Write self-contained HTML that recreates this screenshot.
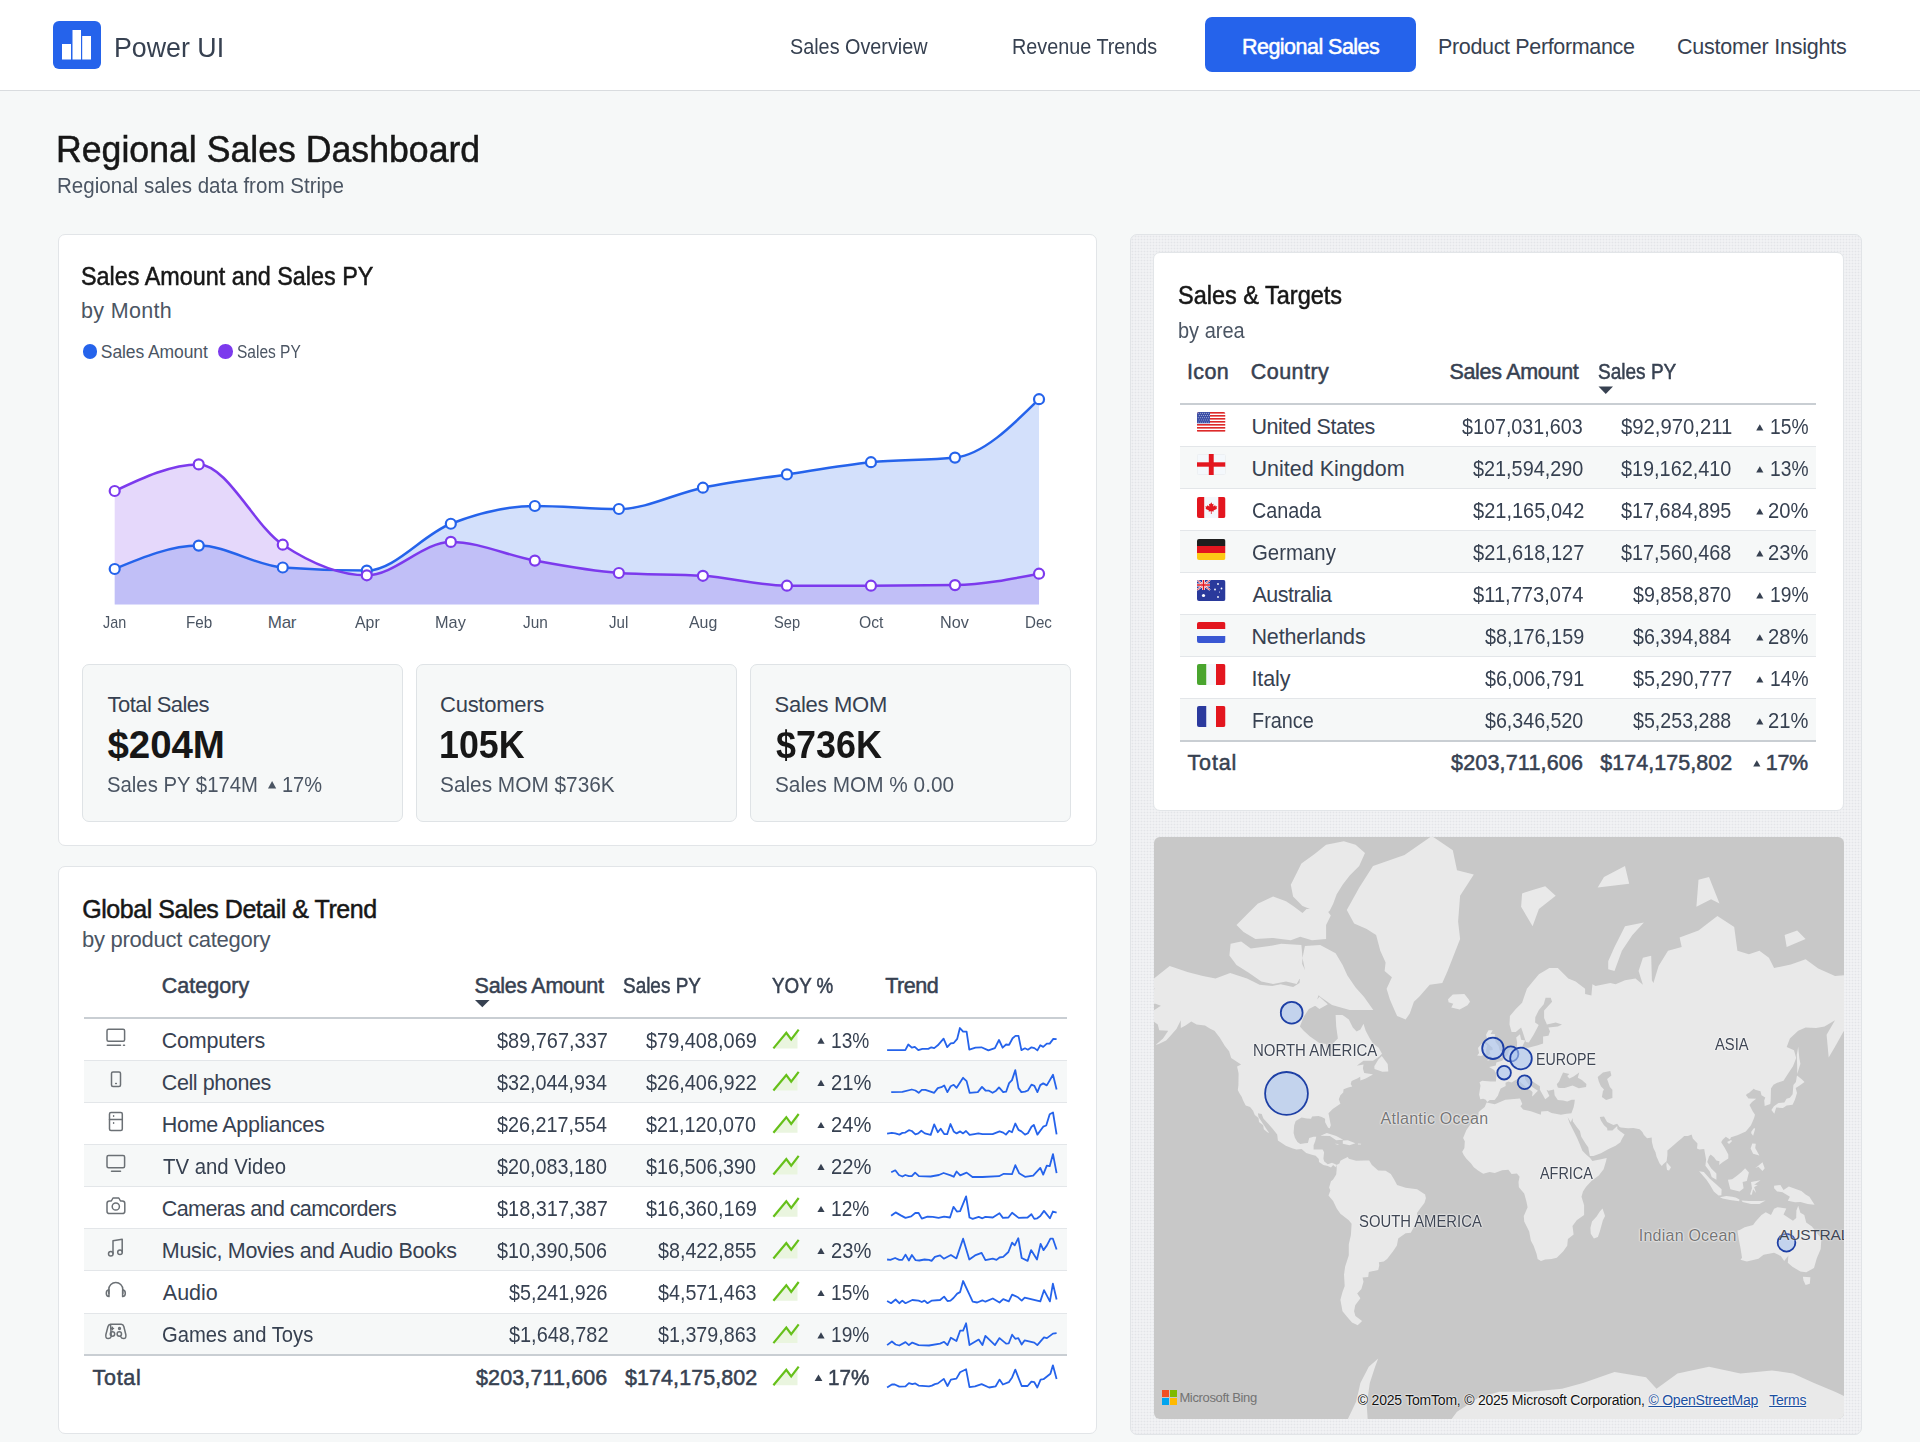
<!DOCTYPE html><html><head><meta charset="utf-8"><title>Power UI - Regional Sales</title><style>
*{box-sizing:border-box;margin:0;padding:0}
html,body{width:1920px;height:1442px;overflow:hidden;background:#f6f8f8;font-family:"Liberation Sans", sans-serif}
.t{position:absolute;white-space:nowrap}
.card{position:absolute;background:#fff;border:1px solid #e2e5e8;border-radius:7px}
</style></head><body><div style="position:absolute;left:0px;top:0px;width:1920px;height:91px;background:#fff;border-bottom:1px solid #d9dcdf"></div>
<svg style="position:absolute;left:53px;top:21px" width="48" height="48" viewBox="0 0 48 48"><rect width="48" height="48" rx="6" fill="#2563eb"/><rect x="9" y="23" width="9" height="15.5" fill="#fff"/><rect x="19.5" y="9" width="8.5" height="29.5" fill="#fff"/><rect x="29.2" y="15" width="8.8" height="23.5" fill="#fff"/></svg>
<div class="t" style="top:34.00px;left:113.59px;font-size:28px;line-height:28px;font-weight:400;color:#374151;transform:scaleX(0.9563);transform-origin:0 0;">Power UI</div>
<div style="position:absolute;left:1205px;top:17px;width:211px;height:55px;background:#2563eb;border-radius:7px"></div>
<div class="t" style="top:37.00px;left:790.00px;font-size:21.5px;line-height:21.5px;font-weight:400;color:#374151;transform:scaleX(0.9210);transform-origin:0 0;">Sales Overview</div>
<div class="t" style="top:37.00px;left:1012.08px;font-size:21.5px;line-height:21.5px;font-weight:400;color:#374151;transform:scaleX(0.9207);transform-origin:0 0;">Revenue Trends</div>
<div class="t" style="top:37.00px;left:1438.00px;font-size:21.5px;line-height:21.5px;font-weight:400;color:#374151;letter-spacing:-0.344px;">Product Performance</div>
<div class="t" style="top:37.00px;left:1677.00px;font-size:21.5px;line-height:21.5px;font-weight:400;color:#374151;letter-spacing:-0.219px;">Customer Insights</div>
<div class="t" style="top:37.00px;left:1242.00px;font-size:21.5px;line-height:21.5px;font-weight:400;color:#ffffff;-webkit-text-stroke:0.5px #ffffff;letter-spacing:-0.529px;">Regional Sales</div>
<div class="t" style="top:131.00px;left:55.81px;font-size:37px;line-height:37px;font-weight:400;color:#171717;-webkit-text-stroke:0.5px #171717;transform:scaleX(0.9637);transform-origin:0 0;">Regional Sales Dashboard</div>
<div class="t" style="top:175.00px;left:57.07px;font-size:22px;line-height:22px;font-weight:400;color:#4b5563;transform:scaleX(0.9349);transform-origin:0 0;">Regional sales data from Stripe</div>
<div class="card" style="left:58px;top:234px;width:1039px;height:612px"></div>
<div class="t" style="top:264.00px;left:81.07px;font-size:25px;line-height:25px;font-weight:400;color:#171717;-webkit-text-stroke:0.5px #171717;transform:scaleX(0.9349);transform-origin:0 0;">Sales Amount and Sales PY</div>
<div class="t" style="top:301.00px;left:81.00px;font-size:21.5px;line-height:21.5px;font-weight:400;color:#4b5563;letter-spacing:0.332px;">by Month</div>
<div style="position:absolute;left:82.5px;top:344px;width:14.5px;height:14.5px;background:#2563eb;border-radius:50%"></div>
<div class="t" style="top:344.00px;left:100.80px;font-size:17.5px;line-height:17.5px;font-weight:400;color:#4b5563;letter-spacing:-0.081px;">Sales Amount</div>
<div style="position:absolute;left:218px;top:344px;width:14.5px;height:14.5px;background:#7c3aed;border-radius:50%"></div>
<div class="t" style="top:344.00px;left:236.70px;font-size:17.5px;line-height:17.5px;font-weight:400;color:#4b5563;transform:scaleX(0.8865);transform-origin:0 0;">Sales PY</div>
<svg style="position:absolute;left:0;top:0" width="1920" height="700"><path d="M114.70,569.00C142.71,557.30 170.72,545.60 198.73,545.60C226.74,545.60 254.75,565.43 282.76,567.50C310.77,569.57 338.78,570.60 366.79,570.60C394.80,570.60 422.81,534.52 450.82,523.75C478.83,512.98 506.84,506.00 534.85,506.00C562.86,506.00 590.87,509.00 618.88,509.00C646.89,509.00 674.90,493.47 702.91,487.70C730.92,481.93 758.93,478.65 786.94,474.40C814.95,470.15 842.96,465.00 870.97,462.20C898.98,459.40 926.99,460.67 955.00,457.60C983.01,454.53 1011.02,426.87 1039.03,399.20L1039.03,604.5L114.70,604.5Z" fill="#2563eb" fill-opacity="0.2"/><path d="M114.70,491.00C142.71,477.70 170.72,464.40 198.73,464.40C226.74,464.40 254.75,526.22 282.76,544.70C310.77,563.18 338.78,575.30 366.79,575.30C394.80,575.30 422.81,541.90 450.82,541.90C478.83,541.90 506.84,555.42 534.85,560.60C562.86,565.78 590.87,571.13 618.88,573.00C646.89,574.87 674.90,573.93 702.91,575.80C730.92,577.67 758.93,585.70 786.94,585.70C814.95,585.70 842.96,585.70 870.97,585.70C898.98,585.70 926.99,585.50 955.00,585.10C983.01,584.70 1011.02,579.20 1039.03,573.70L1039.03,604.5L114.70,604.5Z" fill="#7c3aed" fill-opacity="0.2"/><path d="M114.70,569.00C142.71,557.30 170.72,545.60 198.73,545.60C226.74,545.60 254.75,565.43 282.76,567.50C310.77,569.57 338.78,570.60 366.79,570.60C394.80,570.60 422.81,534.52 450.82,523.75C478.83,512.98 506.84,506.00 534.85,506.00C562.86,506.00 590.87,509.00 618.88,509.00C646.89,509.00 674.90,493.47 702.91,487.70C730.92,481.93 758.93,478.65 786.94,474.40C814.95,470.15 842.96,465.00 870.97,462.20C898.98,459.40 926.99,460.67 955.00,457.60C983.01,454.53 1011.02,426.87 1039.03,399.20" fill="none" stroke="#2563eb" stroke-width="2.5"/><path d="M114.70,491.00C142.71,477.70 170.72,464.40 198.73,464.40C226.74,464.40 254.75,526.22 282.76,544.70C310.77,563.18 338.78,575.30 366.79,575.30C394.80,575.30 422.81,541.90 450.82,541.90C478.83,541.90 506.84,555.42 534.85,560.60C562.86,565.78 590.87,571.13 618.88,573.00C646.89,574.87 674.90,573.93 702.91,575.80C730.92,577.67 758.93,585.70 786.94,585.70C814.95,585.70 842.96,585.70 870.97,585.70C898.98,585.70 926.99,585.50 955.00,585.10C983.01,584.70 1011.02,579.20 1039.03,573.70" fill="none" stroke="#7c3aed" stroke-width="2.5"/><circle cx="114.70" cy="569" r="5" fill="#fff" stroke="#2563eb" stroke-width="2.2"/><circle cx="198.73" cy="545.6" r="5" fill="#fff" stroke="#2563eb" stroke-width="2.2"/><circle cx="282.76" cy="567.5" r="5" fill="#fff" stroke="#2563eb" stroke-width="2.2"/><circle cx="366.79" cy="570.6" r="5" fill="#fff" stroke="#2563eb" stroke-width="2.2"/><circle cx="450.82" cy="523.75" r="5" fill="#fff" stroke="#2563eb" stroke-width="2.2"/><circle cx="534.85" cy="506" r="5" fill="#fff" stroke="#2563eb" stroke-width="2.2"/><circle cx="618.88" cy="509" r="5" fill="#fff" stroke="#2563eb" stroke-width="2.2"/><circle cx="702.91" cy="487.7" r="5" fill="#fff" stroke="#2563eb" stroke-width="2.2"/><circle cx="786.94" cy="474.4" r="5" fill="#fff" stroke="#2563eb" stroke-width="2.2"/><circle cx="870.97" cy="462.2" r="5" fill="#fff" stroke="#2563eb" stroke-width="2.2"/><circle cx="955.00" cy="457.6" r="5" fill="#fff" stroke="#2563eb" stroke-width="2.2"/><circle cx="1039.03" cy="399.2" r="5" fill="#fff" stroke="#2563eb" stroke-width="2.2"/><circle cx="114.70" cy="491" r="5" fill="#fff" stroke="#7c3aed" stroke-width="2.2"/><circle cx="198.73" cy="464.4" r="5" fill="#fff" stroke="#7c3aed" stroke-width="2.2"/><circle cx="282.76" cy="544.7" r="5" fill="#fff" stroke="#7c3aed" stroke-width="2.2"/><circle cx="366.79" cy="575.3" r="5" fill="#fff" stroke="#7c3aed" stroke-width="2.2"/><circle cx="450.82" cy="541.9" r="5" fill="#fff" stroke="#7c3aed" stroke-width="2.2"/><circle cx="534.85" cy="560.6" r="5" fill="#fff" stroke="#7c3aed" stroke-width="2.2"/><circle cx="618.88" cy="573" r="5" fill="#fff" stroke="#7c3aed" stroke-width="2.2"/><circle cx="702.91" cy="575.8" r="5" fill="#fff" stroke="#7c3aed" stroke-width="2.2"/><circle cx="786.94" cy="585.7" r="5" fill="#fff" stroke="#7c3aed" stroke-width="2.2"/><circle cx="870.97" cy="585.7" r="5" fill="#fff" stroke="#7c3aed" stroke-width="2.2"/><circle cx="955.00" cy="585.1" r="5" fill="#fff" stroke="#7c3aed" stroke-width="2.2"/><circle cx="1039.03" cy="573.7" r="5" fill="#fff" stroke="#7c3aed" stroke-width="2.2"/></svg>
<div class="t" style="top:614.00px;left:103.10px;font-size:17px;line-height:17px;font-weight:400;color:#4b5563;transform:scaleX(0.8459);transform-origin:0 0;">Jan</div>
<div class="t" style="top:614.00px;left:185.70px;font-size:17px;line-height:17px;font-weight:400;color:#4b5563;transform:scaleX(0.8980);transform-origin:0 0;">Feb</div>
<div class="t" style="top:614.00px;left:267.80px;font-size:17px;line-height:17px;font-weight:400;color:#4b5563;letter-spacing:-0.308px;">Mar</div>
<div class="t" style="top:614.00px;left:354.70px;font-size:17px;line-height:17px;font-weight:400;color:#4b5563;transform:scaleX(0.9331);transform-origin:0 0;">Apr</div>
<div class="t" style="top:614.00px;left:434.99px;font-size:17px;line-height:17px;font-weight:400;color:#4b5563;transform:scaleX(0.9584);transform-origin:0 0;">May</div>
<div class="t" style="top:614.00px;left:522.50px;font-size:17px;line-height:17px;font-weight:400;color:#4b5563;transform:scaleX(0.9052);transform-origin:0 0;">Jun</div>
<div class="t" style="top:614.00px;left:609.40px;font-size:17px;line-height:17px;font-weight:400;color:#4b5563;transform:scaleX(0.8876);transform-origin:0 0;">Jul</div>
<div class="t" style="top:614.00px;left:689.05px;font-size:17px;line-height:17px;font-weight:400;color:#4b5563;transform:scaleX(0.9364);transform-origin:0 0;">Aug</div>
<div class="t" style="top:614.00px;left:774.05px;font-size:17px;line-height:17px;font-weight:400;color:#4b5563;transform:scaleX(0.8626);transform-origin:0 0;">Sep</div>
<div class="t" style="top:614.00px;left:859.05px;font-size:17px;line-height:17px;font-weight:400;color:#4b5563;transform:scaleX(0.9243);transform-origin:0 0;">Oct</div>
<div class="t" style="top:614.00px;left:940.34px;font-size:17px;line-height:17px;font-weight:400;color:#4b5563;transform:scaleX(0.9552);transform-origin:0 0;">Nov</div>
<div class="t" style="top:614.00px;left:1025.46px;font-size:17px;line-height:17px;font-weight:400;color:#4b5563;transform:scaleX(0.8913);transform-origin:0 0;">Dec</div>
<div style="position:absolute;left:82px;top:664px;width:321px;height:157.5px;background:#f6f8f8;border:1px solid #dfe3e6;border-radius:7px"></div>
<div class="t" style="top:694.00px;left:107.60px;font-size:22px;line-height:22px;font-weight:400;color:#374151;letter-spacing:-0.572px;">Total Sales</div>
<div class="t" style="top:726.00px;left:107.60px;font-size:38.5px;line-height:38.5px;font-weight:700;color:#171717;letter-spacing:-0.137px;">$204M</div>
<div class="t" style="top:774.00px;left:106.68px;font-size:22px;line-height:22px;font-weight:400;color:#4b5563;transform:scaleX(0.9236);transform-origin:0 0;">Sales PY $174M</div>
<div style="position:absolute;left:415.5px;top:664px;width:321px;height:157.5px;background:#f6f8f8;border:1px solid #dfe3e6;border-radius:7px"></div>
<div class="t" style="top:694.00px;left:440.10px;font-size:22px;line-height:22px;font-weight:400;color:#374151;letter-spacing:-0.282px;">Customers</div>
<div class="t" style="top:726.00px;left:439.24px;font-size:38.5px;line-height:38.5px;font-weight:700;color:#171717;transform:scaleX(0.9298);transform-origin:0 0;">105K</div>
<div class="t" style="top:774.00px;left:440.15px;font-size:22px;line-height:22px;font-weight:400;color:#4b5563;transform:scaleX(0.9464);transform-origin:0 0;">Sales MOM $736K</div>
<div style="position:absolute;left:750px;top:664px;width:321px;height:157.5px;background:#f6f8f8;border:1px solid #dfe3e6;border-radius:7px"></div>
<div class="t" style="top:694.00px;left:774.60px;font-size:22px;line-height:22px;font-weight:400;color:#374151;letter-spacing:-0.285px;">Sales MOM</div>
<div class="t" style="top:726.00px;left:775.60px;font-size:38.5px;line-height:38.5px;font-weight:700;color:#171717;transform:scaleX(0.9327);transform-origin:0 0;">$736K</div>
<div class="t" style="top:774.00px;left:774.66px;font-size:22px;line-height:22px;font-weight:400;color:#4b5563;transform:scaleX(0.9449);transform-origin:0 0;">Sales MOM % 0.00</div>
<svg style="position:absolute;left:268.4px;top:781px" width="8.2" height="7.6"><path d="M4.1,0L8.2,7.6L0,7.6Z" fill="#4b5563"/></svg>
<div class="t" style="top:774.00px;left:282.49px;font-size:22px;line-height:22px;font-weight:400;color:#4b5563;transform:scaleX(0.9089);transform-origin:0 0;">17%</div>
<div class="card" style="left:58px;top:866px;width:1039px;height:568px"></div>
<div class="t" style="top:897.00px;left:82.30px;font-size:25px;line-height:25px;font-weight:400;color:#171717;-webkit-text-stroke:0.5px #171717;letter-spacing:-0.475px;">Global Sales Detail &amp; Trend</div>
<div class="t" style="top:929.00px;left:82.00px;font-size:22px;line-height:22px;font-weight:400;color:#4b5563;letter-spacing:-0.262px;">by product category</div>
<div class="t" style="top:976.00px;left:161.80px;font-size:21.5px;line-height:21.5px;font-weight:400;color:#374151;-webkit-text-stroke:0.5px #374151;letter-spacing:0.030px;">Category</div>
<div class="t" style="top:976.00px;left:474.60px;font-size:21.5px;line-height:21.5px;font-weight:400;color:#374151;-webkit-text-stroke:0.5px #374151;letter-spacing:-0.298px;">Sales Amount</div>
<div class="t" style="top:976.00px;left:623.40px;font-size:21.5px;line-height:21.5px;font-weight:400;color:#374151;-webkit-text-stroke:0.5px #374151;transform:scaleX(0.8809);transform-origin:0 0;">Sales PY</div>
<div class="t" style="top:976.00px;left:772.40px;font-size:21.5px;line-height:21.5px;font-weight:400;color:#374151;-webkit-text-stroke:0.5px #374151;transform:scaleX(0.8739);transform-origin:0 0;">YOY %</div>
<div class="t" style="top:976.00px;left:885.20px;font-size:21.5px;line-height:21.5px;font-weight:400;color:#374151;-webkit-text-stroke:0.5px #374151;letter-spacing:-0.452px;">Trend</div>
<svg style="position:absolute;left:474.6px;top:1000px" width="15" height="7.5"><path d="M0,0L14.6,0L7.3,7.3Z" fill="#374151"/></svg>
<div style="position:absolute;left:84px;top:1060.4px;width:983px;height:42.19999999999982px;background:#f6f8f8"></div>
<div style="position:absolute;left:84px;top:1144.4px;width:983px;height:42.19999999999982px;background:#f6f8f8"></div>
<div style="position:absolute;left:84px;top:1228.4px;width:983px;height:42.19999999999982px;background:#f6f8f8"></div>
<div style="position:absolute;left:84px;top:1313px;width:983px;height:42.200000000000045px;background:#f6f8f8"></div>
<div style="position:absolute;left:84px;top:1059.9px;width:983px;height:1px;background:#e3e6e9"></div>
<div style="position:absolute;left:84px;top:1102.1px;width:983px;height:1px;background:#e3e6e9"></div>
<div style="position:absolute;left:84px;top:1143.9px;width:983px;height:1px;background:#e3e6e9"></div>
<div style="position:absolute;left:84px;top:1186.1px;width:983px;height:1px;background:#e3e6e9"></div>
<div style="position:absolute;left:84px;top:1227.9px;width:983px;height:1px;background:#e3e6e9"></div>
<div style="position:absolute;left:84px;top:1270.1px;width:983px;height:1px;background:#e3e6e9"></div>
<div style="position:absolute;left:84px;top:1312.5px;width:983px;height:1px;background:#e3e6e9"></div>
<div style="position:absolute;left:84px;top:1017.3px;width:983px;height:2px;background:#c9ced3"></div>
<div style="position:absolute;left:84px;top:1354.2px;width:983px;height:2px;background:#c9ced3"></div>
<div class="t" style="top:1031.00px;left:161.80px;font-size:21.5px;line-height:21.5px;font-weight:400;color:#374151;letter-spacing:-0.225px;">Computers</div>
<div class="t" style="top:1031.00px;left:497.40px;font-size:21.5px;line-height:21.5px;font-weight:400;color:#374151;transform:scaleX(0.9266);transform-origin:0 0;">$89,767,337</div>
<div class="t" style="top:1031.00px;left:646.40px;font-size:21.5px;line-height:21.5px;font-weight:400;color:#374151;transform:scaleX(0.9266);transform-origin:0 0;">$79,408,069</div>
<div class="t" style="top:1031.00px;left:831.01px;font-size:21.5px;line-height:21.5px;font-weight:400;color:#374151;transform:scaleX(0.8899);transform-origin:0 0;">13%</div>
<div class="t" style="top:1073.00px;left:161.80px;font-size:21.5px;line-height:21.5px;font-weight:400;color:#374151;letter-spacing:-0.410px;">Cell phones</div>
<div class="t" style="top:1073.00px;left:497.40px;font-size:21.5px;line-height:21.5px;font-weight:400;color:#374151;transform:scaleX(0.9189);transform-origin:0 0;">$32,044,934</div>
<div class="t" style="top:1073.00px;left:646.40px;font-size:21.5px;line-height:21.5px;font-weight:400;color:#374151;transform:scaleX(0.9266);transform-origin:0 0;">$26,406,922</div>
<div class="t" style="top:1073.00px;left:830.96px;font-size:21.5px;line-height:21.5px;font-weight:400;color:#374151;transform:scaleX(0.9376);transform-origin:0 0;">21%</div>
<div class="t" style="top:1115.00px;left:161.80px;font-size:21.5px;line-height:21.5px;font-weight:400;color:#374151;letter-spacing:-0.318px;">Home Appliances</div>
<div class="t" style="top:1115.00px;left:497.40px;font-size:21.5px;line-height:21.5px;font-weight:400;color:#374151;transform:scaleX(0.9189);transform-origin:0 0;">$26,217,554</div>
<div class="t" style="top:1115.00px;left:646.40px;font-size:21.5px;line-height:21.5px;font-weight:400;color:#374151;transform:scaleX(0.9189);transform-origin:0 0;">$21,120,070</div>
<div class="t" style="top:1115.00px;left:830.96px;font-size:21.5px;line-height:21.5px;font-weight:400;color:#374151;transform:scaleX(0.9376);transform-origin:0 0;">24%</div>
<div class="t" style="top:1157.00px;left:162.80px;font-size:21.5px;line-height:21.5px;font-weight:400;color:#374151;transform:scaleX(0.9474);transform-origin:0 0;">TV and Video</div>
<div class="t" style="top:1157.00px;left:497.40px;font-size:21.5px;line-height:21.5px;font-weight:400;color:#374151;transform:scaleX(0.9189);transform-origin:0 0;">$20,083,180</div>
<div class="t" style="top:1157.00px;left:646.40px;font-size:21.5px;line-height:21.5px;font-weight:400;color:#374151;transform:scaleX(0.9189);transform-origin:0 0;">$16,506,390</div>
<div class="t" style="top:1157.00px;left:830.96px;font-size:21.5px;line-height:21.5px;font-weight:400;color:#374151;transform:scaleX(0.9376);transform-origin:0 0;">22%</div>
<div class="t" style="top:1199.00px;left:161.80px;font-size:21.5px;line-height:21.5px;font-weight:400;color:#374151;letter-spacing:-0.595px;">Cameras and camcorders</div>
<div class="t" style="top:1199.00px;left:497.40px;font-size:21.5px;line-height:21.5px;font-weight:400;color:#374151;transform:scaleX(0.9266);transform-origin:0 0;">$18,317,387</div>
<div class="t" style="top:1199.00px;left:646.40px;font-size:21.5px;line-height:21.5px;font-weight:400;color:#374151;transform:scaleX(0.9266);transform-origin:0 0;">$16,360,169</div>
<div class="t" style="top:1199.00px;left:831.01px;font-size:21.5px;line-height:21.5px;font-weight:400;color:#374151;transform:scaleX(0.8899);transform-origin:0 0;">12%</div>
<div class="t" style="top:1241.00px;left:161.80px;font-size:21.5px;line-height:21.5px;font-weight:400;color:#374151;letter-spacing:-0.299px;">Music, Movies and Audio Books</div>
<div class="t" style="top:1241.00px;left:497.40px;font-size:21.5px;line-height:21.5px;font-weight:400;color:#374151;transform:scaleX(0.9189);transform-origin:0 0;">$10,390,506</div>
<div class="t" style="top:1241.00px;left:657.70px;font-size:21.5px;line-height:21.5px;font-weight:400;color:#374151;transform:scaleX(0.9160);transform-origin:0 0;">$8,422,855</div>
<div class="t" style="top:1241.00px;left:830.96px;font-size:21.5px;line-height:21.5px;font-weight:400;color:#374151;transform:scaleX(0.9376);transform-origin:0 0;">23%</div>
<div class="t" style="top:1283.00px;left:162.80px;font-size:21.5px;line-height:21.5px;font-weight:400;color:#374151;letter-spacing:-0.008px;">Audio</div>
<div class="t" style="top:1283.00px;left:508.70px;font-size:21.5px;line-height:21.5px;font-weight:400;color:#374151;transform:scaleX(0.9160);transform-origin:0 0;">$5,241,926</div>
<div class="t" style="top:1283.00px;left:657.70px;font-size:21.5px;line-height:21.5px;font-weight:400;color:#374151;transform:scaleX(0.9160);transform-origin:0 0;">$4,571,463</div>
<div class="t" style="top:1283.00px;left:831.01px;font-size:21.5px;line-height:21.5px;font-weight:400;color:#374151;transform:scaleX(0.8899);transform-origin:0 0;">15%</div>
<div class="t" style="top:1325.00px;left:161.86px;font-size:21.5px;line-height:21.5px;font-weight:400;color:#374151;transform:scaleX(0.9400);transform-origin:0 0;">Games and Toys</div>
<div class="t" style="top:1325.00px;left:508.70px;font-size:21.5px;line-height:21.5px;font-weight:400;color:#374151;transform:scaleX(0.9245);transform-origin:0 0;">$1,648,782</div>
<div class="t" style="top:1325.00px;left:657.70px;font-size:21.5px;line-height:21.5px;font-weight:400;color:#374151;transform:scaleX(0.9160);transform-origin:0 0;">$1,379,863</div>
<div class="t" style="top:1325.00px;left:831.01px;font-size:21.5px;line-height:21.5px;font-weight:400;color:#374151;transform:scaleX(0.8899);transform-origin:0 0;">19%</div>
<div class="t" style="top:1368.00px;left:92.50px;font-size:21.5px;line-height:21.5px;font-weight:400;color:#374151;-webkit-text-stroke:0.5px #374151;letter-spacing:0.716px;">Total</div>
<div class="t" style="top:1368.00px;left:476.00px;font-size:21.5px;line-height:21.5px;font-weight:400;color:#374151;-webkit-text-stroke:0.5px #374151;letter-spacing:0.121px;">$203,711,606</div>
<div class="t" style="top:1368.00px;left:625.00px;font-size:21.5px;line-height:21.5px;font-weight:400;color:#374151;-webkit-text-stroke:0.5px #374151;letter-spacing:0.067px;">$174,175,802</div>
<div class="t" style="top:1368.00px;left:828.04px;font-size:21.5px;line-height:21.5px;font-weight:400;color:#374151;-webkit-text-stroke:0.5px #374151;transform:scaleX(0.9591);transform-origin:0 0;">17%</div>
<svg style="position:absolute;left:0;top:0" width="1920" height="1442" fill="none"><path d="M773.4,1048.4L786.3,1032.9L791.2,1039.5L797.5,1031.0L797.5,1048.4Z" fill="#eaf5df"/><path d="M773.4,1048.4L786.3,1032.9L791.2,1039.5L798.7,1029.7" stroke="#66c01a" stroke-width="2.2"/><path d="M821,1037.6L824.6,1043.8L817.4,1043.8Z" fill="#374151"/><path d="M773.4,1090.5L786.3,1075.0L791.2,1081.6L797.5,1073.1L797.5,1090.5Z" fill="#eaf5df"/><path d="M773.4,1090.5L786.3,1075.0L791.2,1081.6L798.7,1071.8" stroke="#66c01a" stroke-width="2.2"/><path d="M821,1079.7L824.6,1085.9L817.4,1085.9Z" fill="#374151"/><path d="M773.4,1132.7L786.3,1117.2L791.2,1123.8L797.5,1115.3L797.5,1132.7Z" fill="#eaf5df"/><path d="M773.4,1132.7L786.3,1117.2L791.2,1123.8L798.7,1114.0" stroke="#66c01a" stroke-width="2.2"/><path d="M821,1121.9L824.6,1128.1L817.4,1128.1Z" fill="#374151"/><path d="M773.4,1174.5L786.3,1159.0L791.2,1165.6L797.5,1157.1L797.5,1174.5Z" fill="#eaf5df"/><path d="M773.4,1174.5L786.3,1159.0L791.2,1165.6L798.7,1155.8" stroke="#66c01a" stroke-width="2.2"/><path d="M821,1163.7L824.6,1169.9L817.4,1169.9Z" fill="#374151"/><path d="M773.4,1216.7L786.3,1201.2L791.2,1207.8L797.5,1199.3L797.5,1216.7Z" fill="#eaf5df"/><path d="M773.4,1216.7L786.3,1201.2L791.2,1207.8L798.7,1198.0" stroke="#66c01a" stroke-width="2.2"/><path d="M821,1205.9L824.6,1212.1L817.4,1212.1Z" fill="#374151"/><path d="M773.4,1258.5L786.3,1243.0L791.2,1249.6L797.5,1241.1L797.5,1258.5Z" fill="#eaf5df"/><path d="M773.4,1258.5L786.3,1243.0L791.2,1249.6L798.7,1239.8" stroke="#66c01a" stroke-width="2.2"/><path d="M821,1247.7L824.6,1253.9L817.4,1253.9Z" fill="#374151"/><path d="M773.4,1300.7L786.3,1285.2L791.2,1291.8L797.5,1283.3L797.5,1300.7Z" fill="#eaf5df"/><path d="M773.4,1300.7L786.3,1285.2L791.2,1291.8L798.7,1282.0" stroke="#66c01a" stroke-width="2.2"/><path d="M821,1289.9L824.6,1296.1L817.4,1296.1Z" fill="#374151"/><path d="M773.4,1343.1L786.3,1327.6L791.2,1334.2L797.5,1325.7L797.5,1343.1Z" fill="#eaf5df"/><path d="M773.4,1343.1L786.3,1327.6L791.2,1334.2L798.7,1324.4" stroke="#66c01a" stroke-width="2.2"/><path d="M821,1332.3L824.6,1338.5L817.4,1338.5Z" fill="#374151"/><path d="M773.4,1385.3L786.3,1369.8L791.2,1376.4L797.5,1367.9L797.5,1385.3Z" fill="#eaf5df"/><path d="M773.4,1385.3L786.3,1369.8L791.2,1376.4L798.7,1366.6" stroke="#66c01a" stroke-width="2.2"/><path d="M818.5,1374.4L822.4,1381L814.6,1381Z" fill="#374151"/><g stroke="#6b7075" stroke-width="1.5" stroke-linecap="round" stroke-linejoin="round"><rect x="107" y="1029.3" width="17.6" height="12" rx="1.5"/><path d="M107.3,1045.2H120.5M123.5,1045.2H124.5"/><rect x="111.5" y="1072" width="9" height="14.5" rx="1.5"/><path d="M115.7,1083.6H116.3"/><rect x="109.5" y="1112.4" width="12.8" height="18" rx="1.5"/><path d="M109.5,1119.4H122.3M113.6,1115.8V1116.2M113.6,1122.8V1123.2"/><rect x="107" y="1155.5" width="17.6" height="12.3" rx="1.5"/><path d="M111.5,1171.2H120.5"/><path d="M107,1203.5Q107,1201 109.5,1201H111.3L113,1198H118.8L120.5,1201H122.3Q124.8,1201 124.8,1203.5V1211.2Q124.8,1213.6 122.3,1213.6H109.5Q107,1213.6 107,1211.2Z"/><circle cx="115.8" cy="1206.5" r="3.6"/><path d="M113,1253.5V1240.7L122.2,1239.2V1252"/><circle cx="110.8" cy="1253.8" r="2.3"/><circle cx="120" cy="1252.3" r="2.3"/><path d="M108.8,1293.5V1289.5A7,7 0 0 1 122.8,1289.5V1293.5"/><path d="M109,1289.8Q106.3,1290.2 106.3,1293.2Q106.3,1296.4 109,1296.6Z"/><path d="M122.6,1289.8Q125.3,1290.2 125.3,1293.2Q125.3,1296.4 122.6,1296.6Z"/><path d="M110.5,1324.3H121.3Q123.2,1324.3 123.8,1326.5L125.8,1334.5Q126.5,1338.5 123.5,1338.6Q121.6,1338.6 120.6,1336.5M111.3,1336.5Q110.3,1338.6 108.3,1338.6Q105.2,1338.5 105.9,1334.5L108,1326.5Q108.6,1324.3 110.5,1324.3Z"/><circle cx="112.5" cy="1334" r="2.2"/><circle cx="119.3" cy="1334" r="2.2"/><path d="M112.3,1327.3V1329.7M111.1,1328.5H113.5"/><circle cx="119.5" cy="1328.5" r="0.9"/></g></svg>
<svg style="position:absolute;left:0;top:0" width="1920" height="1442" fill="none" stroke="#2563eb" stroke-width="1.8" stroke-linejoin="round"><path d="M887.1,1050.1 905.3,1050.1 908.3,1044.5 911.8,1047.7 914.8,1046.9 918.3,1050.1 922.4,1048.9 928.3,1048.9 931.3,1047.3 934.2,1048.1 937.8,1045.3 943.6,1038.6 947.2,1047.1 950.7,1043.3 953.7,1043.0 957.2,1038.9 959.9,1028.0 963.1,1031.6 966.6,1031.6 969.3,1049.7 975.5,1047.7 981.4,1047.3 988.4,1050.4 994.9,1048.1 999.0,1040.0 1002.6,1047.7 1006.1,1044.5 1009.1,1044.8 1012.6,1038.3 1015.5,1035.9 1018.5,1035.9 1021.4,1050.1 1025.0,1048.3 1027.9,1049.7 1031.5,1047.3 1034.4,1048.1 1037.4,1050.4 1040.3,1045.3 1043.2,1046.9 1046.8,1043.6 1049.7,1043.6 1053.3,1038.9 1056.6,1039.1"/><path d="M891.2,1092.1 902.4,1091.9 911.8,1089.5 915.4,1090.5 918.7,1092.8 921.8,1089.8 925.4,1089.8 934.2,1092.8 937.8,1088.1 941.3,1087.2 944.2,1085.4 947.4,1092.1 950.7,1086.2 953.7,1084.8 956.6,1087.8 963.1,1077.8 966.6,1081.1 969.6,1092.8 977.8,1092.1 982.0,1086.9 985.5,1090.5 989.0,1090.7 992.6,1092.8 996.1,1090.7 999.0,1087.4 1003.2,1092.1 1006.1,1091.7 1009.1,1083.1 1012.0,1080.1 1015.3,1070.1 1018.5,1088.1 1021.4,1092.1 1025.0,1091.7 1027.9,1090.5 1031.5,1084.6 1034.4,1085.8 1037.4,1092.1 1040.3,1085.1 1043.2,1083.4 1046.8,1085.4 1053.0,1074.8 1056.6,1089.5"/><path d="M887.1,1133.7 891.8,1132.9 895.3,1133.4 899.4,1134.6 902.4,1132.9 905.3,1132.6 908.9,1130.2 911.8,1131.0 915.4,1134.3 918.3,1133.4 921.3,1130.8 924.8,1133.4 930.7,1134.9 934.2,1124.3 937.8,1132.2 940.7,1128.7 944.2,1134.1 947.2,1134.1 950.5,1124.0 953.7,1131.4 956.6,1133.4 960.2,1131.4 963.1,1133.4 966.0,1131.0 969.6,1134.9 974.3,1134.1 978.4,1133.4 982.5,1134.1 992.6,1134.1 999.6,1131.4 1003.2,1132.6 1005.9,1134.6 1009.1,1130.8 1012.0,1132.2 1015.3,1123.5 1018.5,1129.9 1021.4,1131.4 1025.0,1134.6 1027.9,1133.2 1031.5,1126.7 1033.8,1124.9 1037.4,1134.6 1043.2,1126.7 1046.2,1125.5 1049.7,1114.3 1053.0,1112.5 1056.6,1134.3"/><path d="M891.2,1172.3 895.3,1170.3 898.9,1175.0 902.4,1176.5 905.3,1175.0 908.9,1176.2 911.8,1176.2 915.1,1172.6 918.9,1176.2 930.7,1176.5 938.9,1175.0 943.6,1173.0 950.7,1175.4 953.7,1176.8 956.6,1171.5 960.2,1175.4 966.6,1172.6 972.5,1177.0 982.5,1177.0 999.0,1176.2 1003.8,1173.8 1012.0,1174.2 1015.3,1165.2 1019.1,1173.2 1025.0,1176.8 1033.2,1175.6 1040.3,1167.9 1043.2,1174.6 1046.8,1165.6 1049.7,1166.2 1053.0,1154.1 1056.6,1173.2"/><path d="M891.1,1215.7 895.6,1212.4 900.8,1215.4 905.5,1217.9 911.2,1216.4 915.3,1213.0 918.6,1213.0 921.8,1218.6 927.5,1216.7 932.7,1216.9 938.6,1217.9 944.1,1216.7 950.0,1217.5 953.5,1206.8 956.9,1211.5 960.1,1211.2 966.1,1196.4 969.5,1217.5 972.7,1218.9 978.7,1216.9 982.4,1218.3 985.4,1216.9 992.8,1217.5 999.5,1213.2 1002.9,1217.9 1008.4,1217.5 1012.1,1212.7 1018.7,1217.9 1027.6,1217.5 1031.4,1214.2 1034.3,1218.9 1037.3,1218.3 1040.3,1216.0 1044.0,1210.9 1049.9,1218.3 1052.9,1211.5 1056.6,1212.7"/><path d="M887.1,1259.5 890.4,1259.9 895.1,1258.0 899.3,1259.9 902.3,1259.9 905.5,1254.6 908.9,1260.5 911.9,1255.0 915.6,1260.2 919.3,1260.5 924.5,1259.5 929.0,1259.9 931.6,1260.9 934.9,1256.9 940.1,1255.4 943.8,1258.7 950.9,1255.0 956.4,1258.4 963.1,1238.7 969.3,1259.5 975.0,1255.4 981.6,1252.8 985.4,1260.2 992.8,1258.7 996.5,1259.9 999.5,1257.5 1003.2,1256.9 1008.4,1252.0 1012.1,1242.7 1014.7,1245.4 1018.3,1238.2 1021.7,1258.0 1027.6,1260.9 1031.1,1250.1 1037.0,1259.5 1040.6,1243.9 1043.5,1250.1 1046.9,1245.4 1050.4,1238.7 1052.9,1238.7 1056.6,1249.5"/><path d="M887.1,1301.0 891.1,1303.2 895.6,1299.5 899.3,1303.2 902.3,1300.6 905.5,1303.2 912.3,1300.0 918.6,1300.6 921.8,1302.0 924.5,1300.6 927.5,1303.2 931.9,1300.6 940.1,1300.0 944.1,1296.6 947.5,1301.0 950.5,1300.6 953.5,1298.0 957.2,1293.6 960.1,1292.1 963.1,1281.0 969.0,1293.6 972.7,1301.7 977.2,1302.5 982.4,1300.3 985.4,1301.7 992.8,1298.5 999.5,1302.5 1003.2,1299.1 1008.8,1301.4 1012.1,1294.6 1018.0,1297.3 1021.7,1300.6 1024.7,1297.6 1040.3,1301.4 1044.0,1290.2 1049.9,1301.4 1052.9,1283.6 1056.6,1299.5"/><path d="M887.1,1345.1 891.9,1341.5 895.6,1344.5 899.3,1345.5 905.5,1342.1 908.9,1345.1 912.3,1342.6 918.6,1345.1 929.0,1345.5 940.1,1343.6 944.1,1341.8 947.5,1345.1 950.9,1337.7 956.4,1341.1 960.1,1330.7 963.1,1330.7 966.1,1323.3 969.5,1345.1 978.7,1339.6 982.4,1345.1 985.4,1335.9 995.0,1345.1 999.5,1338.1 1006.1,1343.6 1008.8,1343.3 1012.1,1334.7 1015.3,1338.8 1018.3,1338.1 1021.7,1344.5 1024.7,1340.3 1034.3,1342.6 1037.3,1345.1 1044.0,1337.4 1046.9,1338.1 1052.9,1333.6 1056.6,1333.2"/><path d="M887.1,1387.5 891.9,1384.5 894.8,1384.5 899.3,1386.6 905.5,1386.3 908.9,1383.1 912.3,1384.1 915.3,1383.4 918.6,1385.6 929.0,1386.3 931.9,1385.6 934.9,1384.1 937.9,1383.4 943.8,1378.9 947.5,1386.0 950.9,1379.6 956.4,1378.6 960.1,1372.2 966.1,1369.3 969.5,1387.1 975.0,1386.3 981.6,1384.1 989.1,1387.5 995.7,1386.3 999.5,1379.6 1002.9,1384.5 1008.8,1382.2 1012.1,1377.4 1015.3,1369.7 1021.7,1386.0 1027.6,1386.0 1031.4,1381.6 1034.3,1382.2 1037.3,1387.5 1040.6,1379.6 1043.5,1379.2 1050.4,1373.7 1052.9,1365.3 1056.6,1378.9"/></svg>
<div style="position:absolute;left:1130px;top:234px;width:732px;height:1201px;background-color:#f1f2f4;background-image:radial-gradient(#e3e5e8 0.8px, transparent 1.1px);background-size:3px 3px;border:1px solid #e1e4e7;border-radius:7px"></div>
<div class="card" style="left:1153px;top:252px;width:691px;height:559px"></div>
<div class="t" style="top:283.00px;left:1177.66px;font-size:25px;line-height:25px;font-weight:400;color:#171717;-webkit-text-stroke:0.5px #171717;transform:scaleX(0.9396);transform-origin:0 0;">Sales &amp; Targets</div>
<div class="t" style="top:320.00px;left:1177.69px;font-size:22px;line-height:22px;font-weight:400;color:#4b5563;transform:scaleX(0.9092);transform-origin:0 0;">by area</div>
<div class="t" style="top:362.00px;left:1187.00px;font-size:21.5px;line-height:21.5px;font-weight:400;color:#374151;-webkit-text-stroke:0.5px #374151;letter-spacing:0.340px;">Icon</div>
<div class="t" style="top:362.00px;left:1250.80px;font-size:21.5px;line-height:21.5px;font-weight:400;color:#374151;-webkit-text-stroke:0.5px #374151;letter-spacing:0.445px;">Country</div>
<div class="t" style="top:362.00px;left:1449.40px;font-size:21.5px;line-height:21.5px;font-weight:400;color:#374151;-webkit-text-stroke:0.5px #374151;letter-spacing:-0.298px;">Sales Amount</div>
<div class="t" style="top:362.00px;left:1598.20px;font-size:21.5px;line-height:21.5px;font-weight:400;color:#374151;-webkit-text-stroke:0.5px #374151;transform:scaleX(0.8854);transform-origin:0 0;">Sales PY</div>
<svg style="position:absolute;left:1598px;top:386px" width="16" height="9"><path d="M0.5,0.5L15,0.5L7.75,8Z" fill="#374151"/></svg>
<div style="position:absolute;left:1179.5px;top:446.2px;width:636.5px;height:42.30000000000001px;background:#f6f8f8"></div>
<div style="position:absolute;left:1179.5px;top:530.9px;width:636.5px;height:41.5px;background:#f6f8f8"></div>
<div style="position:absolute;left:1179.5px;top:614.4px;width:636.5px;height:42.0px;background:#f6f8f8"></div>
<div style="position:absolute;left:1179.5px;top:698.3px;width:636.5px;height:42.80000000000007px;background:#f6f8f8"></div>
<div style="position:absolute;left:1179.5px;top:445.7px;width:636.5px;height:1px;background:#e3e6e9"></div>
<div style="position:absolute;left:1179.5px;top:488.0px;width:636.5px;height:1px;background:#e3e6e9"></div>
<div style="position:absolute;left:1179.5px;top:530.4px;width:636.5px;height:1px;background:#e3e6e9"></div>
<div style="position:absolute;left:1179.5px;top:571.9px;width:636.5px;height:1px;background:#e3e6e9"></div>
<div style="position:absolute;left:1179.5px;top:613.9px;width:636.5px;height:1px;background:#e3e6e9"></div>
<div style="position:absolute;left:1179.5px;top:655.9px;width:636.5px;height:1px;background:#e3e6e9"></div>
<div style="position:absolute;left:1179.5px;top:697.8px;width:636.5px;height:1px;background:#e3e6e9"></div>
<div style="position:absolute;left:1179.5px;top:403.3px;width:636.5px;height:2px;background:#c9ced3"></div>
<div style="position:absolute;left:1179.5px;top:740.1px;width:636.5px;height:2px;background:#c9ced3"></div>
<svg style="position:absolute;left:1197px;top:412.3px" width="28.5" height="21" viewBox="0 0 28.5 21"><defs><clipPath id="cus"><rect width="28.5" height="21" rx="2"/></clipPath></defs><g clip-path="url(#cus)"><rect width="28.5" height="21" fill="#fff"/><rect y="0.00" width="28.5" height="1.62" fill="#dd2a2a"/><rect y="3.00" width="28.5" height="1.62" fill="#dd2a2a"/><rect y="6.00" width="28.5" height="1.62" fill="#dd2a2a"/><rect y="9.00" width="28.5" height="1.62" fill="#dd2a2a"/><rect y="12.00" width="28.5" height="1.62" fill="#dd2a2a"/><rect y="15.00" width="28.5" height="1.62" fill="#dd2a2a"/><rect y="18.00" width="28.5" height="1.62" fill="#dd2a2a"/><rect width="13" height="11.3" fill="#3c4fa6"/><circle cx="1.2" cy="1.3" r="0.45" fill="#fff"/><circle cx="3.3" cy="1.3" r="0.45" fill="#fff"/><circle cx="5.4" cy="1.3" r="0.45" fill="#fff"/><circle cx="7.5" cy="1.3" r="0.45" fill="#fff"/><circle cx="9.6" cy="1.3" r="0.45" fill="#fff"/><circle cx="11.7" cy="1.3" r="0.45" fill="#fff"/><circle cx="2.2" cy="3.5" r="0.45" fill="#fff"/><circle cx="4.3" cy="3.5" r="0.45" fill="#fff"/><circle cx="6.4" cy="3.5" r="0.45" fill="#fff"/><circle cx="8.5" cy="3.5" r="0.45" fill="#fff"/><circle cx="10.6" cy="3.5" r="0.45" fill="#fff"/><circle cx="12.7" cy="3.5" r="0.45" fill="#fff"/><circle cx="1.2" cy="5.7" r="0.45" fill="#fff"/><circle cx="3.3" cy="5.7" r="0.45" fill="#fff"/><circle cx="5.4" cy="5.7" r="0.45" fill="#fff"/><circle cx="7.5" cy="5.7" r="0.45" fill="#fff"/><circle cx="9.6" cy="5.7" r="0.45" fill="#fff"/><circle cx="11.7" cy="5.7" r="0.45" fill="#fff"/><circle cx="2.2" cy="7.9" r="0.45" fill="#fff"/><circle cx="4.3" cy="7.9" r="0.45" fill="#fff"/><circle cx="6.4" cy="7.9" r="0.45" fill="#fff"/><circle cx="8.5" cy="7.9" r="0.45" fill="#fff"/><circle cx="10.6" cy="7.9" r="0.45" fill="#fff"/><circle cx="12.7" cy="7.9" r="0.45" fill="#fff"/><circle cx="1.2" cy="10.1" r="0.45" fill="#fff"/><circle cx="3.3" cy="10.1" r="0.45" fill="#fff"/><circle cx="5.4" cy="10.1" r="0.45" fill="#fff"/><circle cx="7.5" cy="10.1" r="0.45" fill="#fff"/><circle cx="9.6" cy="10.1" r="0.45" fill="#fff"/><circle cx="11.7" cy="10.1" r="0.45" fill="#fff"/></g></svg>
<div class="t" style="top:417.00px;left:1251.50px;font-size:21.5px;line-height:21.5px;font-weight:400;color:#374151;letter-spacing:-0.444px;">United States</div>
<div class="t" style="top:417.00px;left:1462.30px;font-size:21.5px;line-height:21.5px;font-weight:400;color:#374151;transform:scaleX(0.9174);transform-origin:0 0;">$107,031,603</div>
<div class="t" style="top:417.00px;left:1620.90px;font-size:21.5px;line-height:21.5px;font-weight:400;color:#374151;transform:scaleX(0.9435);transform-origin:0 0;">$92,970,211</div>
<div class="t" style="top:417.00px;left:1769.61px;font-size:21.5px;line-height:21.5px;font-weight:400;color:#374151;transform:scaleX(0.8947);transform-origin:0 0;">15%</div>
<svg style="position:absolute;left:1756px;top:423.7px" width="8" height="7"><path d="M3.8,0.2L7.4,6.4L0.2,6.4Z" fill="#374151"/></svg>
<svg style="position:absolute;left:1197px;top:454.2px" width="28.5" height="21" viewBox="0 0 28.5 21"><defs><clipPath id="cgb"><rect width="28.5" height="21" rx="2"/></clipPath></defs><g clip-path="url(#cgb)"><rect width="28.5" height="21" fill="#f4f8fc" stroke="#e5e7ea" stroke-width="1"/><rect x="11.8" width="4.9" height="21" fill="#e3161f"/><rect y="8.3" width="28.5" height="4.4" fill="#e3161f"/></g></svg>
<div class="t" style="top:459.00px;left:1251.50px;font-size:21.5px;line-height:21.5px;font-weight:400;color:#374151;letter-spacing:0.010px;">United Kingdom</div>
<div class="t" style="top:459.00px;left:1472.60px;font-size:21.5px;line-height:21.5px;font-weight:400;color:#374151;transform:scaleX(0.9230);transform-origin:0 0;">$21,594,290</div>
<div class="t" style="top:459.00px;left:1620.90px;font-size:21.5px;line-height:21.5px;font-weight:400;color:#374151;transform:scaleX(0.9230);transform-origin:0 0;">$19,162,410</div>
<div class="t" style="top:459.00px;left:1769.61px;font-size:21.5px;line-height:21.5px;font-weight:400;color:#374151;transform:scaleX(0.8947);transform-origin:0 0;">13%</div>
<svg style="position:absolute;left:1756px;top:465.7px" width="8" height="7"><path d="M3.8,0.2L7.4,6.4L0.2,6.4Z" fill="#374151"/></svg>
<svg style="position:absolute;left:1197px;top:496.5px" width="28.5" height="21" viewBox="0 0 28.5 21"><defs><clipPath id="cca"><rect width="28.5" height="21" rx="2"/></clipPath></defs><g clip-path="url(#cca)"><rect width="28.5" height="21" fill="#f3f7fb"/><rect width="7.2" height="21" fill="#e3161f"/><rect x="21.3" width="7.2" height="21" fill="#e3161f"/><path d="M14.25,5.2L15.3,7.2L16.6,6.8L16.1,9.6L18.2,8.2L18.6,9.4L20.2,9.2L19.4,11.2L20.2,11.8L16.5,13.5L16.9,14.6L14.6,14.3L14.6,17H13.9L13.9,14.3L11.6,14.6L12,13.5L8.3,11.8L9.1,11.2L8.3,9.2L9.9,9.4L10.3,8.2L12.4,9.6L11.9,6.8L13.2,7.2Z" fill="#e3161f"/></g></svg>
<div class="t" style="top:501.00px;left:1251.58px;font-size:21.5px;line-height:21.5px;font-weight:400;color:#374151;transform:scaleX(0.9212);transform-origin:0 0;">Canada</div>
<div class="t" style="top:501.00px;left:1472.60px;font-size:21.5px;line-height:21.5px;font-weight:400;color:#374151;transform:scaleX(0.9308);transform-origin:0 0;">$21,165,042</div>
<div class="t" style="top:501.00px;left:1620.90px;font-size:21.5px;line-height:21.5px;font-weight:400;color:#374151;transform:scaleX(0.9230);transform-origin:0 0;">$17,684,895</div>
<div class="t" style="top:501.00px;left:1767.76px;font-size:21.5px;line-height:21.5px;font-weight:400;color:#374151;transform:scaleX(0.9376);transform-origin:0 0;">20%</div>
<svg style="position:absolute;left:1756px;top:507.7px" width="8" height="7"><path d="M3.8,0.2L7.4,6.4L0.2,6.4Z" fill="#374151"/></svg>
<svg style="position:absolute;left:1197px;top:538.9px" width="28.5" height="21" viewBox="0 0 28.5 21"><defs><clipPath id="cde"><rect width="28.5" height="21" rx="2"/></clipPath></defs><g clip-path="url(#cde)"><rect width="28.5" height="7" fill="#1e1e1e"/><rect y="7" width="28.5" height="7" fill="#e3161f"/><rect y="14" width="28.5" height="7" fill="#fdc916"/></g></svg>
<div class="t" style="top:543.00px;left:1251.55px;font-size:21.5px;line-height:21.5px;font-weight:400;color:#374151;transform:scaleX(0.9491);transform-origin:0 0;">Germany</div>
<div class="t" style="top:543.00px;left:1472.60px;font-size:21.5px;line-height:21.5px;font-weight:400;color:#374151;transform:scaleX(0.9308);transform-origin:0 0;">$21,618,127</div>
<div class="t" style="top:543.00px;left:1620.90px;font-size:21.5px;line-height:21.5px;font-weight:400;color:#374151;transform:scaleX(0.9230);transform-origin:0 0;">$17,560,468</div>
<div class="t" style="top:543.00px;left:1767.76px;font-size:21.5px;line-height:21.5px;font-weight:400;color:#374151;transform:scaleX(0.9376);transform-origin:0 0;">23%</div>
<svg style="position:absolute;left:1756px;top:549.7px" width="8" height="7"><path d="M3.8,0.2L7.4,6.4L0.2,6.4Z" fill="#374151"/></svg>
<svg style="position:absolute;left:1197px;top:580.4px" width="28.5" height="21" viewBox="0 0 28.5 21"><defs><clipPath id="cau"><rect width="28.5" height="21" rx="2"/></clipPath></defs><g clip-path="url(#cau)"><rect width="28.5" height="21" fill="#2a3a9c"/><rect width="13" height="10" fill="#2a3a9c"/><path d="M0,0L13,10M13,0L0,10" stroke="#fff" stroke-width="2"/><path d="M0,0L13,10M13,0L0,10" stroke="#e3161f" stroke-width="0.8"/><path d="M6.5,0V10M0,5H13" stroke="#fff" stroke-width="3"/><path d="M6.5,0V10M0,5H13" stroke="#e3161f" stroke-width="1.6"/><circle cx="6.5" cy="15.5" r="1.6" fill="#fff"/><circle cx="21" cy="4" r="0.9" fill="#fff"/><circle cx="18" cy="9.5" r="0.9" fill="#fff"/><circle cx="24.5" cy="8.5" r="0.9" fill="#fff"/><circle cx="21" cy="17" r="0.9" fill="#fff"/><circle cx="22.5" cy="12" r="0.5" fill="#fff"/></g></svg>
<div class="t" style="top:585.00px;left:1252.50px;font-size:21.5px;line-height:21.5px;font-weight:400;color:#374151;letter-spacing:-0.524px;">Australia</div>
<div class="t" style="top:585.00px;left:1472.60px;font-size:21.5px;line-height:21.5px;font-weight:400;color:#374151;transform:scaleX(0.9355);transform-origin:0 0;">$11,773,074</div>
<div class="t" style="top:585.00px;left:1633.00px;font-size:21.5px;line-height:21.5px;font-weight:400;color:#374151;transform:scaleX(0.9132);transform-origin:0 0;">$9,858,870</div>
<div class="t" style="top:585.00px;left:1769.61px;font-size:21.5px;line-height:21.5px;font-weight:400;color:#374151;transform:scaleX(0.8947);transform-origin:0 0;">19%</div>
<svg style="position:absolute;left:1756px;top:591.7px" width="8" height="7"><path d="M3.8,0.2L7.4,6.4L0.2,6.4Z" fill="#374151"/></svg>
<svg style="position:absolute;left:1197px;top:622.4px" width="28.5" height="21" viewBox="0 0 28.5 21"><defs><clipPath id="cnl"><rect width="28.5" height="21" rx="2"/></clipPath></defs><g clip-path="url(#cnl)"><rect width="28.5" height="7" fill="#e3161f"/><rect y="7" width="28.5" height="7" fill="#f3f7fb"/><rect y="14" width="28.5" height="7" fill="#3957d3"/></g></svg>
<div class="t" style="top:627.00px;left:1251.50px;font-size:21.5px;line-height:21.5px;font-weight:400;color:#374151;letter-spacing:-0.178px;">Netherlands</div>
<div class="t" style="top:627.00px;left:1484.70px;font-size:21.5px;line-height:21.5px;font-weight:400;color:#374151;transform:scaleX(0.9217);transform-origin:0 0;">$8,176,159</div>
<div class="t" style="top:627.00px;left:1633.00px;font-size:21.5px;line-height:21.5px;font-weight:400;color:#374151;transform:scaleX(0.9132);transform-origin:0 0;">$6,394,884</div>
<div class="t" style="top:627.00px;left:1767.76px;font-size:21.5px;line-height:21.5px;font-weight:400;color:#374151;transform:scaleX(0.9376);transform-origin:0 0;">28%</div>
<svg style="position:absolute;left:1756px;top:633.7px" width="8" height="7"><path d="M3.8,0.2L7.4,6.4L0.2,6.4Z" fill="#374151"/></svg>
<svg style="position:absolute;left:1197px;top:664.4px" width="28.5" height="21" viewBox="0 0 28.5 21"><defs><clipPath id="cit"><rect width="28.5" height="21" rx="2"/></clipPath></defs><g clip-path="url(#cit)"><rect width="9.5" height="21" fill="#4aa52e"/><rect x="9.5" width="9.5" height="21" fill="#f3f7fb"/><rect x="19" width="9.5" height="21" fill="#e3161f"/></g></svg>
<div class="t" style="top:669.00px;left:1251.50px;font-size:21.5px;line-height:21.5px;font-weight:400;color:#374151;letter-spacing:-0.120px;">Italy</div>
<div class="t" style="top:669.00px;left:1484.70px;font-size:21.5px;line-height:21.5px;font-weight:400;color:#374151;transform:scaleX(0.9217);transform-origin:0 0;">$6,006,791</div>
<div class="t" style="top:669.00px;left:1633.00px;font-size:21.5px;line-height:21.5px;font-weight:400;color:#374151;transform:scaleX(0.9217);transform-origin:0 0;">$5,290,777</div>
<div class="t" style="top:669.00px;left:1769.61px;font-size:21.5px;line-height:21.5px;font-weight:400;color:#374151;transform:scaleX(0.8947);transform-origin:0 0;">14%</div>
<svg style="position:absolute;left:1756px;top:675.7px" width="8" height="7"><path d="M3.8,0.2L7.4,6.4L0.2,6.4Z" fill="#374151"/></svg>
<svg style="position:absolute;left:1197px;top:706.3px" width="28.5" height="21" viewBox="0 0 28.5 21"><defs><clipPath id="cfr"><rect width="28.5" height="21" rx="2"/></clipPath></defs><g clip-path="url(#cfr)"><rect width="9.5" height="21" fill="#2b3a9e"/><rect x="9.5" width="9.5" height="21" fill="#f3f7fb"/><rect x="19" width="9.5" height="21" fill="#e3161f"/></g></svg>
<div class="t" style="top:711.00px;left:1251.58px;font-size:21.5px;line-height:21.5px;font-weight:400;color:#374151;transform:scaleX(0.9237);transform-origin:0 0;">France</div>
<div class="t" style="top:711.00px;left:1484.70px;font-size:21.5px;line-height:21.5px;font-weight:400;color:#374151;transform:scaleX(0.9132);transform-origin:0 0;">$6,346,520</div>
<div class="t" style="top:711.00px;left:1633.00px;font-size:21.5px;line-height:21.5px;font-weight:400;color:#374151;transform:scaleX(0.9132);transform-origin:0 0;">$5,253,288</div>
<div class="t" style="top:711.00px;left:1767.76px;font-size:21.5px;line-height:21.5px;font-weight:400;color:#374151;transform:scaleX(0.9376);transform-origin:0 0;">21%</div>
<svg style="position:absolute;left:1756px;top:717.7px" width="8" height="7"><path d="M3.8,0.2L7.4,6.4L0.2,6.4Z" fill="#374151"/></svg>
<div class="t" style="top:753.00px;left:1187.50px;font-size:21.5px;line-height:21.5px;font-weight:400;color:#374151;-webkit-text-stroke:0.5px #374151;letter-spacing:0.841px;">Total</div>
<div class="t" style="top:753.00px;left:1451.00px;font-size:21.5px;line-height:21.5px;font-weight:400;color:#374151;-webkit-text-stroke:0.5px #374151;letter-spacing:0.185px;">$203,711,606</div>
<div class="t" style="top:753.00px;left:1600.30px;font-size:21.5px;line-height:21.5px;font-weight:400;color:#374151;-webkit-text-stroke:0.5px #374151;letter-spacing:0.040px;">$174,175,802</div>
<div class="t" style="top:753.00px;left:1765.80px;font-size:21.5px;line-height:21.5px;font-weight:400;color:#374151;-webkit-text-stroke:0.5px #374151;letter-spacing:-0.357px;">17%</div>
<svg style="position:absolute;left:1753px;top:759.5px" width="8" height="7"><path d="M3.8,0.2L7.4,6.4L0.2,6.4Z" fill="#374151"/></svg>
<div style="position:absolute;left:1154px;top:837px;width:690px;height:582px;border-radius:6px;overflow:hidden;background:#c8c8c8">
<svg width="690" height="582" style="position:absolute;left:0;top:0"><path d="M-7.8,161.7 0.6,151.7 -3.6,144.4 15.7,129.0 34.2,135.3 48.9,139.0 61.5,141.4 76.2,136.0 93.0,141.4 105.6,147.8 118.2,148.9 126.6,147.2 139.2,150.0 145.5,146.1 147.6,125.6 152.8,137.2 160.2,144.4 166.5,138.4 172.8,146.1 173.8,154.4 164.4,158.6 161.2,168.7 154.9,172.0 149.7,179.8 145.9,189.6 149.7,193.7 156.0,199.6 165.4,206.0 172.2,207.1 172.4,214.6 177.0,220.4 179.1,212.5 179.3,206.0 183.9,201.5 182.2,189.6 181.6,178.0 188.5,178.0 194.8,182.4 198.8,190.5 202.6,194.5 206.4,192.5 209.5,186.7 211.7,193.7 215.8,201.5 219.0,206.4 224.7,210.7 228.0,216.7 225.3,219.4 219.0,223.7 209.5,223.7 205.3,226.7 198.0,232.4 201.2,228.9 209.5,227.6 208.9,231.4 210.2,236.0 216.9,237.0 219.0,237.6 211.7,241.4 206.4,243.5 206.2,239.7 203.2,241.4 197.6,244.1 196.7,246.9 198.2,249.5 194.2,250.6 189.6,252.3 189.2,255.6 186.4,258.3 184.8,262.3 186.4,266.7 181.6,270.0 178.7,272.0 174.5,276.2 175.9,283.5 176.8,288.3 175.7,291.3 174.1,290.8 171.1,285.2 171.1,281.8 167.8,280.1 164.4,278.9 158.1,279.4 157.0,281.8 152.8,281.4 147.6,280.6 141.7,284.0 140.2,288.3 139.6,295.9 140.9,300.7 143.4,304.9 146.3,307.1 150.8,306.2 153.9,306.0 155.2,301.1 159.6,299.8 162.3,299.8 161.2,304.2 159.6,308.2 159.6,312.4 163.3,312.4 168.6,312.4 170.1,315.2 169.4,321.7 170.3,324.5 173.8,327.2 178.0,325.7 182.5,327.7 181.6,330.2 179.1,328.1 177.0,330.6 173.8,329.1 169.4,328.1 165.0,324.9 164.8,322.1 161.7,318.7 157.0,317.4 152.2,316.1 147.6,312.0 142.3,312.6 138.1,311.3 131.8,308.7 123.9,303.6 123.2,297.5 118.2,291.3 114.0,286.4 109.4,281.6 107.7,277.0 103.9,276.2 104.5,279.9 108.3,285.7 110.8,289.4 113.4,293.6 115.3,296.1 113.4,295.2 109.8,292.2 109.2,288.3 105.0,284.9 104.5,281.1 100.8,278.0 99.1,273.8 96.1,270.0 91.7,268.5 89.0,263.3 87.8,260.1 85.0,255.6 83.8,253.1 84.4,248.6 84.6,236.4 83.1,229.5 87.1,227.6 82.5,224.4 77.2,221.1 75.1,214.3 70.9,208.9 65.7,200.4 60.4,193.7 56.2,191.7 51.0,188.4 42.6,187.5 37.3,184.6 31.1,188.8 26.8,190.9 26.8,183.3 22.6,191.7 17.4,197.7 12.1,203.4 4.8,207.1 1.6,207.9 9.0,201.5 14.2,193.7 5.2,193.3 3.8,187.5 -2.1,183.3 -2.6,176.6 -0.4,173.4 6.9,168.7 1.6,166.7 -4.2,166.7ZM251.6,182.4 243.1,178.9 238.9,169.6 235.8,162.2 232.6,151.7 237.9,140.2 230.6,134.1 231.6,125.6 226.3,113.7 222.1,97.9 212.7,91.9 200.1,86.5 192.8,72.9 205.3,50.4 219.0,28.9 250.5,18.1 277.8,-1.0 298.8,13.2 303.0,33.2 319.8,37.4 306.1,58.8 304.1,84.6 306.1,102.0 298.8,120.8 293.6,134.1 288.3,146.1 275.7,147.8 265.2,159.7 259.9,164.7 255.8,176.6ZM294.0,162.2 298.8,157.6 310.4,157.1 314.6,162.2 316.0,164.7 313.5,168.2 305.7,172.5 297.3,170.6 299.2,166.7 294.6,165.2ZM182.5,327.9 185.4,326.4 186.4,323.8 189.6,322.1 193.8,320.0 194.8,321.7 202.2,323.8 210.6,323.6 215.2,323.4 217.9,328.1 224.2,333.4 231.6,333.8 236.8,337.0 240.0,342.2 243.1,348.1 251.6,350.8 263.1,352.3 271.1,357.6 271.9,361.2 270.4,366.0 266.2,371.4 263.1,375.7 262.7,383.3 259.9,390.0 256.8,395.7 251.6,396.3 244.2,401.4 242.9,408.5 238.9,414.5 233.1,422.0 229.7,424.6 224.9,425.3 225.3,428.4 224.2,432.9 214.8,435.1 214.2,440.0 208.5,440.6 209.5,444.8 207.4,452.0 203.2,456.6 206.4,461.2 201.2,468.3 200.1,474.3 201.4,479.1 208.1,484.1 203.7,488.2 198.0,485.6 192.8,479.5 188.5,474.3 186.4,462.8 188.5,455.0 190.7,449.1 190.0,437.8 191.1,429.7 194.8,418.2 194.8,407.3 196.9,397.9 197.6,386.7 194.8,383.3 186.4,376.8 182.7,371.4 179.1,363.9 174.5,358.6 176.4,353.4 175.1,350.6 177.0,344.3 179.1,342.4 182.2,337.6 182.7,331.7ZM325.1,257.5 326.5,248.6 325.5,245.2 328.2,243.8 336.6,244.6 341.9,244.4 342.5,237.0 340.2,233.0 335.1,229.9 341.9,228.6 342.3,225.4 348.1,223.7 351.3,220.4 353.8,217.7 355.1,213.6 359.7,212.5 362.9,210.7 363.1,205.3 362.2,200.4 366.0,197.3 367.1,202.7 371.2,203.4 367.7,210.7 374.4,210.7 383.9,208.2 389.1,206.4 389.1,199.6 394.4,198.8 396.0,194.5 394.4,190.5 403.8,189.6 408.0,187.5 401.7,185.4 392.9,187.5 390.1,181.1 390.1,173.4 398.1,164.7 396.7,160.7 391.6,160.7 389.7,167.2 384.9,172.9 381.3,180.2 381.1,185.4 384.7,188.0 379.6,197.7 374.8,205.6 371.9,204.9 368.7,194.9 367.1,190.5 361.8,194.9 357.6,194.9 355.5,187.5 355.9,178.9 361.8,172.0 368.1,165.7 372.9,151.7 377.6,146.1 384.9,137.2 395.4,130.9 403.8,130.9 410.1,137.2 414.3,141.4 421.6,144.4 431.1,151.7 431.1,157.1 437.4,158.6 438.4,147.2 441.6,148.9 456.3,146.1 461.6,147.2 471.0,143.2 481.5,141.4 488.9,147.8 484.6,134.1 488.9,120.8 497.2,118.7 497.9,143.2 499.4,146.1 504.6,129.0 514.0,113.7 527.7,109.9 525.6,100.4 544.5,93.6 563.4,78.9 580.2,90.1 583.4,113.7 594.9,117.3 605.4,113.7 614.9,120.8 620.1,130.9 636.9,127.6 651.6,122.2 664.2,131.5 681.0,139.0 697.8,137.8 714.6,140.2 744.0,154.4 744.0,169.6 723.0,164.7 719.9,168.2 712.5,178.0 706.2,183.3 693.6,187.5 688.4,196.5 685.2,202.3 681.0,209.7 674.7,220.4 672.6,197.7 681.0,183.3 670.5,189.6 662.1,190.9 651.6,190.5 644.2,193.7 635.9,201.5 632.7,210.0 640.0,213.2 642.2,221.1 639.0,229.2 634.8,235.4 629.5,243.8 623.2,245.8 619.5,247.8 617.0,251.4 616.7,263.6 616.3,266.9 610.7,269.0 610.2,263.6 611.3,260.4 607.5,258.3 606.5,254.2 601.2,252.8 599.7,251.7 594.9,256.1 592.8,256.9 592.0,258.3 594.5,261.5 602.2,261.7 598.0,264.9 595.5,268.0 598.7,274.3 601.0,277.7 600.1,281.1 597.0,288.3 591.8,294.5 583.4,298.2 577.0,300.2 576.0,302.4 571.8,299.8 568.6,302.7 567.2,305.3 570.8,310.9 574.3,317.4 574.3,321.5 568.6,325.3 565.1,327.9 565.5,324.3 562.4,323.6 560.2,320.4 556.7,317.6 555.0,319.5 553.3,324.9 555.6,329.1 557.5,331.7 562.4,336.5 562.4,342.8 557.7,340.1 555.8,334.4 551.4,328.7 552.1,322.8 550.2,312.0 545.3,312.4 543.0,311.5 543.5,306.5 538.8,301.6 537.6,297.5 534.0,299.1 530.2,299.1 527.5,301.6 523.5,304.7 517.8,309.8 513.4,313.5 513.4,318.0 512.6,324.3 509.2,327.2 507.8,328.9 505.6,326.4 502.5,319.5 501.5,315.2 499.4,310.9 497.9,304.9 497.7,300.4 493.1,301.3 489.9,297.9 488.4,295.0 485.7,292.2 479.4,291.1 474.1,291.3 466.8,290.4 465.3,289.7 463.2,286.8 459.4,288.0 453.1,284.9 450.0,279.4 445.8,279.9 446.9,283.5 450.0,288.3 453.1,291.1 453.4,293.6 458.4,293.6 463.2,289.0 463.4,292.0 466.4,294.5 470.6,297.5 467.9,302.0 466.4,305.3 461.6,308.7 454.6,312.0 446.9,316.3 439.5,318.9 435.9,319.1 434.9,314.1 434.2,310.2 431.5,306.5 427.3,299.8 425.9,294.1 422.7,289.9 418.9,284.5 418.5,281.1 416.8,285.2 413.5,280.1 412.8,276.7 417.4,276.2 419.6,270.3 420.4,266.2 420.8,262.8 417.7,262.8 413.2,264.6 409.1,263.6 403.8,263.0 400.6,258.3 400.2,254.2 400.0,252.6 394.4,253.7 392.5,252.8 395.4,259.1 391.2,262.3 389.3,258.8 385.9,252.8 385.9,249.2 378.6,244.4 373.6,238.2 370.8,239.1 371.0,242.3 374.4,247.2 378.6,250.3 383.9,253.7 380.7,256.9 379.6,258.3 378.0,259.6 378.6,255.6 377.6,253.9 374.4,252.0 371.2,249.2 367.1,245.8 363.9,242.0 360.8,243.5 357.6,245.5 354.4,244.4 351.5,245.8 351.7,248.9 346.7,251.4 345.0,255.6 343.9,258.8 340.6,263.0 335.8,263.0 333.2,264.9 331.8,262.8 329.2,261.7 326.3,262.3ZM333.0,224.1 338.7,222.1 347.9,220.4 348.6,215.3 345.6,212.9 344.6,208.9 341.6,204.9 340.6,199.2 341.2,197.3 336.6,196.9 338.7,193.3 334.5,193.3 332.0,197.7 333.2,201.9 332.2,204.9 334.9,207.5 338.5,210.7 338.7,212.9 335.3,213.6 336.4,216.7 333.9,218.4 337.6,219.8ZM332.4,217.0 332.0,212.9 333.2,208.6 329.9,206.0 327.6,206.8 324.0,211.1 325.1,216.0 323.2,218.4 327.1,219.1 331.6,217.0ZM332.6,265.4 340.8,267.2 351.3,262.8 366.0,261.5 368.3,266.9 366.4,269.2 369.1,272.5 376.9,274.3 386.8,277.7 387.2,274.5 393.7,274.0 397.5,276.0 406.9,277.7 412.8,276.7 413.5,280.1 415.6,285.9 419.6,294.1 423.1,300.9 425.9,307.6 428.4,313.7 432.1,317.4 435.9,320.8 438.4,324.0 445.8,322.5 452.7,321.0 452.1,324.0 449.6,332.3 444.8,338.6 437.4,343.9 432.1,349.8 429.0,354.4 427.5,359.7 430.1,368.2 430.1,377.9 422.7,383.3 418.5,388.9 419.6,397.5 413.9,402.1 413.2,408.7 409.1,414.5 402.8,420.7 397.5,422.0 391.2,422.5 387.0,424.0 383.6,422.0 382.6,417.0 379.6,408.7 376.9,403.7 375.2,394.5 370.2,384.4 369.8,379.0 373.6,370.3 372.3,363.9 370.2,356.5 364.9,350.2 364.5,344.9 365.6,339.7 362.9,336.5 357.6,337.0 354.4,332.7 348.1,333.2 340.8,335.9 335.6,335.1 329.2,336.8 324.0,333.4 319.8,330.2 317.1,326.4 312.4,321.7 309.7,318.0 308.2,314.8 310.4,310.9 310.8,304.2 309.1,300.9 312.4,292.9 317.7,285.4 324.4,281.1 324.6,275.0 330.7,270.0ZM448.5,371.4 451.1,379.0 448.9,383.3 445.8,394.5 443.9,400.0 439.9,401.4 436.8,396.8 436.4,391.1 438.0,384.4 442.6,379.6 445.8,374.6ZM583.4,393.4 584.8,402.6 586.5,410.9 588.0,420.7 586.5,422.8 592.8,424.6 604.4,421.7 609.6,417.7 620.1,415.8 626.8,419.0 630.2,424.0 634.4,418.5 633.8,425.8 638.4,429.7 646.4,434.5 652.2,435.3 660.0,431.1 662.7,421.5 666.7,412.1 667.4,401.4 661.7,394.5 657.9,389.6 652.2,385.5 650.3,377.9 646.4,375.7 644.2,368.8 642.4,373.5 642.2,381.1 639.0,383.8 634.4,380.7 629.5,377.4 632.3,371.4 623.5,370.3 620.1,371.8 617.0,377.9 611.7,375.3 607.5,377.9 601.6,384.4 599.1,388.0 590.7,390.2 585.7,392.9ZM648.9,439.7 656.4,440.3 655.8,446.8 651.6,447.9 649.5,443.4ZM-54.0,722.8 -54.0,617.1 9.0,617.1 51.0,602.8 93.0,594.1 135.0,590.0 177.0,586.0 193.8,582.1 202.2,564.4 206.4,545.9 214.8,529.8 224.2,521.4 221.1,529.8 215.8,545.9 212.7,567.7 214.8,598.4 271.5,617.1 303.0,574.7 324.0,561.1 345.0,554.8 376.5,554.8 408.0,551.8 429.0,545.9 460.5,534.9 492.0,540.3 502.5,551.8 523.5,536.5 555.0,529.8 586.5,536.5 618.0,533.4 639.0,536.5 660.0,545.9 681.0,554.8 702.0,564.4 744.0,617.1 744.0,722.8ZM159.2,167.2 165.4,159.7 173.8,167.2 165.4,172.0ZM220.5,232.0 228.4,234.8 234.3,234.5 233.7,227.0 227.8,219.1 224.2,222.8 220.3,229.2ZM367.1,69.8 378.6,89.2 384.9,71.9 401.7,58.8 391.2,49.2 378.6,52.9 368.1,56.4ZM454.2,132.2 460.5,134.1 467.9,113.7 478.4,97.9 489.9,85.6 471.0,89.2 460.5,109.9 454.2,124.3ZM443.7,50.4 475.2,46.7 471.0,28.9 450.0,40.1ZM542.4,69.8 557.1,62.2 565.5,66.6 555.0,40.1 544.5,42.8ZM632.7,109.9 651.6,102.0 643.2,93.6 630.6,97.9ZM512.6,325.3 517.0,330.2 515.1,333.4 513.0,333.0 512.4,328.5ZM617.4,273.0 620.3,276.7 622.2,270.5 628.9,271.0 632.7,268.5 638.6,267.7 640.9,262.8 643.0,256.1 641.7,250.9 645.7,248.6 650.5,244.9 648.0,242.6 643.0,238.5 641.9,244.9 639.4,248.1 639.0,252.8 638.6,257.2 635.9,260.7 632.5,261.7 630.4,265.6 624.5,265.9 619.9,269.2ZM643.2,237.0 646.4,226.7 645.3,221.1 644.2,209.7 642.8,217.7 643.2,230.8ZM597.2,296.3 599.1,298.8 601.2,291.8 600.1,291.1 597.4,294.5ZM573.1,304.9 577.0,302.9 578.1,304.0 575.0,307.1ZM596.6,311.5 598.3,306.5 601.8,306.7 601.2,310.9 605.4,318.5 599.1,316.7ZM601.2,331.3 608.5,325.3 610.7,331.3 608.5,334.0 604.4,329.8ZM545.1,334.2 549.8,335.1 555.6,341.4 563.0,348.1 567.6,352.3 567.4,358.2 564.5,358.4 559.8,354.4 556.0,348.1 552.3,342.4ZM565.9,360.3 572.4,359.0 578.1,359.7 581.7,360.5 585.5,362.4 585.2,364.3 576.0,363.1 568.6,361.6ZM573.9,342.8 575.2,348.1 576.4,352.3 585.5,354.4 589.6,351.3 588.6,344.9 592.8,343.9 594.9,335.5 591.1,331.3 587.5,334.9 582.3,339.3 578.1,342.2ZM596.0,357.6 598.0,351.3 597.0,344.9 606.5,343.3 600.1,347.7 603.7,348.1 600.1,350.2 602.2,356.1 599.1,352.3 597.8,357.8ZM620.1,348.7 626.4,347.9 629.5,352.9 634.8,349.4 647.4,354.0 651.6,357.6 655.4,359.7 660.6,367.7 653.7,367.1 646.4,365.0 641.1,365.2 633.8,363.7 635.9,359.7 628.5,355.2 623.2,354.4 620.1,351.3ZM587.5,363.5 594.9,363.9 601.2,363.9 607.5,363.9 611.7,363.5 605.4,367.1 597.0,367.1 588.6,365.0ZM166.5,298.8 172.8,295.9 182.2,299.1 189.2,302.7 182.2,303.3 175.9,299.1ZM188.8,303.6 193.8,303.3 201.4,306.2 195.5,308.2 188.8,306.7ZM180.6,306.7 185.0,307.1 183.7,307.8ZM203.9,306.5 207.2,306.7 206.8,307.6 203.9,307.6ZM147.4,26.6 160.3,17.2 172.1,7.7 189.8,4.2 201.6,7.7 211.0,16.0 205.2,28.9 195.7,38.4 188.6,47.8 182.7,57.2 179.2,66.7 175.7,73.8 169.8,78.5 160.3,73.8 148.5,69.0 139.1,59.6 136.8,47.8 142.7,36.0ZM82.5,87.9 91.9,78.5 103.7,66.7 119.1,59.6 132.0,64.3 139.1,69.0 148.5,76.1 155.6,69.0 169.8,69.0 176.8,78.5 172.1,87.9 172.1,102.1 158.0,103.2 146.2,99.7 136.8,103.2 119.1,100.9 101.4,102.1 89.6,95.0ZM76.6,106.8 87.2,104.4 96.7,111.5 115.5,109.1 127.3,106.8 147.4,108.0 148.5,120.9 147.4,138.6 142.7,146.9 132.0,144.5 119.1,146.9 107.3,144.5 95.5,136.3 82.5,128.0 75.4,118.6ZM150.9,109.1 166.2,108.0 181.6,116.2 188.6,128.0 193.4,138.6 201.6,150.4 209.9,159.8 219.3,173.0 195.7,173.0 178.0,168.1 166.2,159.8 155.6,149.2 150.9,132.7 148.5,120.9Z" fill="#e9e9e9"/>
<path d="M402.8,247.2 403.8,250.6 405.9,250.9 410.7,250.9 418.5,248.6 424.8,251.2 432.1,250.0 432.4,246.9 427.9,242.9 423.8,240.8 425.2,235.4 419.6,239.4 415.4,241.4 413.2,239.1 415.4,237.0 409.1,235.4 407.2,239.4 405.1,244.4Z" fill="#c8c8c8"/><path d="M443.7,240.0 448.9,235.4 456.3,233.9 457.4,238.5 453.1,242.0 455.9,250.0 458.4,252.8 458.4,260.9 452.1,263.0 447.9,260.1 448.9,254.2 450.0,252.6 446.9,249.2 444.8,244.4Z" fill="#c8c8c8"/>
<circle cx="132.5" cy="256.4" r="21.4" fill="#aac4f0" fill-opacity="0.6" stroke="#1d3fa5" stroke-width="1.8"/>
<circle cx="137.7" cy="175.7" r="10.9" fill="#aac4f0" fill-opacity="0.6" stroke="#1d3fa5" stroke-width="1.8"/>
<circle cx="338.9" cy="211.3" r="10.7" fill="#aac4f0" fill-opacity="0.6" stroke="#1d3fa5" stroke-width="1.8"/>
<circle cx="356.8" cy="217.0" r="7.6" fill="#aac4f0" fill-opacity="0.6" stroke="#1d3fa5" stroke-width="1.8"/>
<circle cx="367.0" cy="221.5" r="10.8" fill="#aac4f0" fill-opacity="0.6" stroke="#1d3fa5" stroke-width="1.8"/>
<circle cx="350.1" cy="235.7" r="6.8" fill="#aac4f0" fill-opacity="0.6" stroke="#1d3fa5" stroke-width="1.8"/>
<circle cx="370.6" cy="245.2" r="6.9" fill="#aac4f0" fill-opacity="0.6" stroke="#1d3fa5" stroke-width="1.8"/>
<circle cx="632.5" cy="405.7" r="8.85" fill="#aac4f0" fill-opacity="0.6" stroke="#1d3fa5" stroke-width="1.8"/>
</svg></div>
<div class="t" style="top:1043.00px;left:1253.07px;font-size:16px;line-height:16px;font-weight:400;color:#3f4654;transform:scaleX(0.9342);transform-origin:0 0;text-shadow:0 0 2px #fff,0 0 2px #fff;">NORTH AMERICA</div>
<div class="t" style="top:1052.00px;left:1536.31px;font-size:16px;line-height:16px;font-weight:400;color:#3f4654;transform:scaleX(0.8877);transform-origin:0 0;text-shadow:0 0 2px #fff,0 0 2px #fff;">EUROPE</div>
<div class="t" style="top:1037.00px;left:1714.60px;font-size:16px;line-height:16px;font-weight:400;color:#3f4654;transform:scaleX(0.9215);transform-origin:0 0;text-shadow:0 0 2px #fff,0 0 2px #fff;">ASIA</div>
<div class="t" style="top:1166.00px;left:1539.80px;font-size:16px;line-height:16px;font-weight:400;color:#3f4654;transform:scaleX(0.9000);transform-origin:0 0;text-shadow:0 0 2px #fff,0 0 2px #fff;">AFRICA</div>
<div class="t" style="top:1214.00px;left:1359.30px;font-size:16px;line-height:16px;font-weight:400;color:#3f4654;transform:scaleX(0.9269);transform-origin:0 0;text-shadow:0 0 2px #fff,0 0 2px #fff;">SOUTH AMERICA</div>
<div class="t" style="top:1111.00px;left:1380.50px;font-size:16px;line-height:16px;font-weight:400;color:#767676;letter-spacing:0.273px;text-shadow:0 0 2px #fff,0 0 2px #fff;">Atlantic Ocean</div>
<div class="t" style="top:1228.00px;left:1638.80px;font-size:16px;line-height:16px;font-weight:400;color:#767676;letter-spacing:0.229px;text-shadow:0 0 2px #fff,0 0 2px #fff;">Indian Ocean</div>
<div style="position:absolute;left:1779px;top:1227px;width:65px;height:20px;overflow:hidden"><div class="t" style="left:0;top:0.3px;font-size:15.5px;line-height:15.5px;color:#3f4654;letter-spacing:-0.2px;text-shadow:0 0 2px #fff">AUSTRALIA</div></div>
<svg style="position:absolute;left:1162px;top:1389.5px" width="15" height="15"><rect width="7" height="7" fill="#f25022"/><rect x="8" width="7" height="7" fill="#7fba00"/><rect y="8" width="7" height="7" fill="#00a4ef"/><rect x="8" y="8" width="7" height="7" fill="#ffb900"/></svg>
<div class="t" style="top:1391.00px;left:1179.40px;font-size:13px;line-height:13px;font-weight:400;color:#737373;letter-spacing:-0.349px;">Microsoft Bing</div>
<div class="t" style="top:1393.00px;left:1357.80px;font-size:14px;line-height:14px;font-weight:400;color:#111;letter-spacing:-0.22px;text-shadow:0 0 2px #fff,0 0 2px #fff;">© 2025 TomTom, © 2025 Microsoft Corporation, <span style="color:#1a4fa0;text-decoration:underline">© OpenStreetMap</span>&nbsp;&nbsp;&nbsp;<span style="color:#1a4fa0;text-decoration:underline">Terms</span></div></body></html>
